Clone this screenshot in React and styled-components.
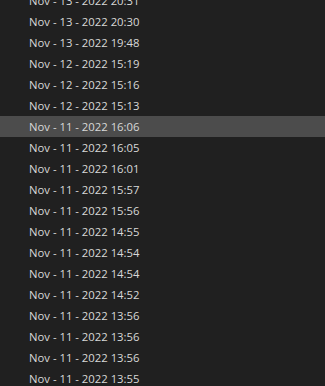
import React from "react";
import styled, { createGlobalStyle } from "styled-components";

const GlobalStyle = createGlobalStyle`
  html, body {
    margin: 0;
    padding: 0;
    background: #202020;
    overflow: hidden;
  }
`;

const dates = [
  "Nov - 13 - 2022 20:31",
  "Nov - 13 - 2022 20:30",
  "Nov - 13 - 2022 19:48",
  "Nov - 12 - 2022 15:19",
  "Nov - 12 - 2022 15:16",
  "Nov - 12 - 2022 15:13",
  "Nov - 11 - 2022 16:06",
  "Nov - 11 - 2022 16:05",
  "Nov - 11 - 2022 16:01",
  "Nov - 11 - 2022 15:57",
  "Nov - 11 - 2022 15:56",
  "Nov - 11 - 2022 14:55",
  "Nov - 11 - 2022 14:54",
  "Nov - 11 - 2022 14:54",
  "Nov - 11 - 2022 14:52",
  "Nov - 11 - 2022 13:56",
  "Nov - 11 - 2022 13:56",
  "Nov - 11 - 2022 13:56",
  "Nov - 11 - 2022 13:55",
];

export default function App() {
  const selected = 6;
  return (
    <>
      <GlobalStyle />
      <List>
        {dates.map((d, i) => (
          <Row key={i} active={i === selected}>
            {d}
          </Row>
        ))}
      </List>
    </>
  );
}

const List = styled.div`
  display: flex;
  flex-direction: column;
  margin-top: -10px;
  width: 325px;
  height: 396px;
  background: #202020;
`;

const Row = styled.div`
  height: 21px;
  flex-shrink: 0;
  display: flex;
  align-items: center;
  padding-left: 29px;
  font-family: "Open Sans", "Noto Sans", sans-serif;
  font-size: 11.3px;
  color: #d8d8d8;
  background: ${(p) => (p.active ? "#4c4c4c" : "transparent")};
  white-space: nowrap;
`;
